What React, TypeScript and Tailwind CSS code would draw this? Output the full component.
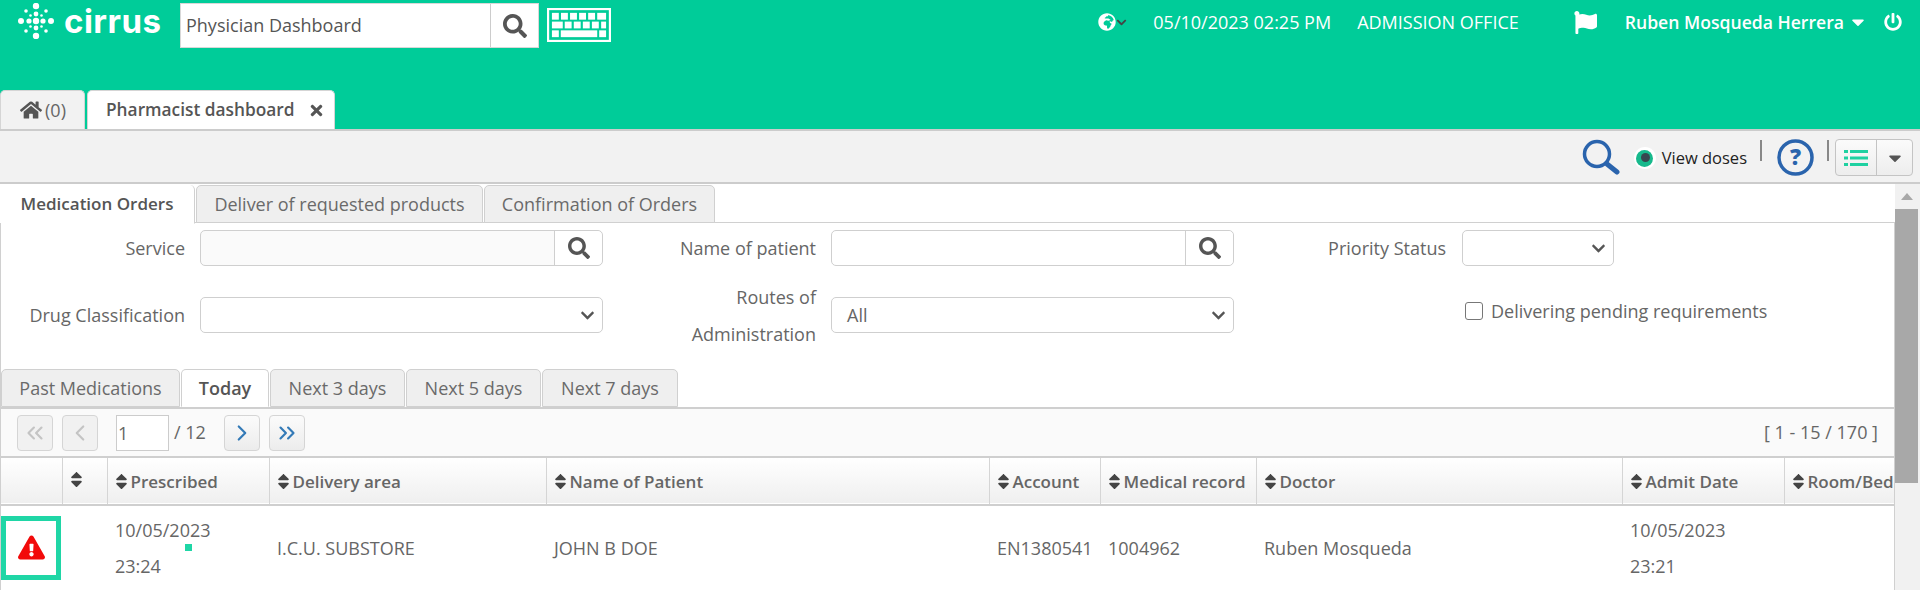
import React from "react";
import { FaHome, FaSearch, FaTimes, FaFlag, FaPowerOff, FaCaretDown, FaSort, FaGlobeAfrica, FaExclamationTriangle, FaChevronDown } from "react-icons/fa";
import { ChevronLeft, ChevronRight, ChevronsLeft, ChevronsRight } from "lucide-react";

const font = "font-['Open_Sans',sans-serif]";

function Logo() {
  const dots: [number, number, number][] = [
    [18, 3, 3.2], [18, 33, 3.2], [3, 18, 3], [33, 18, 3],
    [18, 18, 3.2], [11, 18, 2.6], [25, 18, 2.6], [18, 11, 2.4], [18, 25, 2.4],
    [8, 8, 1.8], [28, 8, 1.8], [8, 28, 1.8], [28, 28, 1.8],
    [12.5, 12.5, 1.3], [23.5, 12.5, 1.3], [12.5, 23.5, 1.3], [23.5, 23.5, 1.3],
  ];
  return (
    <svg viewBox="0 0 36 36" className="w-[36px] h-[36px] shrink-0 fill-white">
      {dots.map(([x, y, r], i) => <circle key={i} cx={x} cy={y} r={r} />)}
    </svg>
  );
}

function Keyboard() {
  const rows: [number, number, number][] = [];
  [0, 1, 2, 3, 4].forEach((i) => rows.push([5 + i * 9.2, 5, 7]));
  rows.push([51, 5, 9]);
  rows.push([5, 14, 11]);
  [0, 1, 2, 3].forEach((i) => rows.push([18 + i * 9.2, 14, 7]));
  rows.push([55, 14, 5]);
  return (
    <svg viewBox="0 0 65 35" preserveAspectRatio="none" className="w-[64px] h-[34px] shrink-0 ml-[8px] mt-[5px]">
      <rect x="1" y="1" width="63" height="33" fill="none" stroke="#fff" strokeWidth="2.4" />
      {rows.map(([x, y, w], i) => <rect key={i} x={x} y={y} width={w} height="7" fill="#fff" />)}
      <rect x="5" y="23" width="7" height="7" fill="#fff" />
      <rect x="14" y="23" width="37" height="7" fill="#fff" />
      <rect x="53" y="23" width="7" height="7" fill="#fff" />
    </svg>
  );
}

function TopTab({ active, className, children }: { active?: boolean; className: string; children: React.ReactNode }) {
  return (
    <div className={`flex items-center rounded-t-[5px] border border-b-0 border-[#d5d5d5] h-[39px] text-[#555] ${active ? "bg-white font-semibold" : "bg-[#f2f2f2]"} ${className}`}>
      {children}
    </div>
  );
}

function Tab({ active, className, children }: { active?: boolean; className: string; children: React.ReactNode }) {
  return (
    <div className={`flex items-center justify-center shrink-0 rounded-t-[5px] border border-[#d0d0d0] ${active ? "bg-white border-b-white font-semibold text-[#555]" : "bg-[#efefef] text-[#6a6a6a] text-[18px]"} ${className}`}>
      {children}
    </div>
  );
}

function SearchBox({ disabled }: { disabled?: boolean }) {
  return (
    <div className={`flex w-[403px] h-[36px] rounded-[5px] border border-[#cfcfcf] ${disabled ? "bg-[#fafafa]" : "bg-white"}`}>
      <div className="flex-1" />
      <div className="w-[48px] border-l border-[#cfcfcf] bg-white rounded-r-[5px] flex items-center justify-center text-[#555] text-[22px]">
        <FaSearch />
      </div>
    </div>
  );
}

function SelectBox({ width, value }: { width: string; value?: string }) {
  return (
    <div className={`flex items-center justify-between h-[36px] rounded-[5px] border border-[#cfcfcf] bg-white pl-[15px] pr-[7px] text-[18px] text-[#666] ${width}`}>
      <span>{value}</span>
      <FaChevronDown className="text-[#555] text-[15px]" />
    </div>
  );
}

function PagerButton({ on, children }: { on?: boolean; children: React.ReactNode }) {
  return (
    <div className={`w-[36px] h-[36px] rounded-[4px] border border-[#d5d5d5] flex items-center justify-center ${on ? "bg-gradient-to-b from-[#fbfbfb] to-[#ececec] text-[#337ab7]" : "bg-[#f1f1f1] text-[#c4c4c4]"}`}>
      {children}
    </div>
  );
}

function Th({ children }: { children?: React.ReactNode }) {
  return (
    <th className="border-l border-[#d5d5d5] p-0 pl-[4px] pt-[4px] text-left font-semibold text-[17px] text-[#666] whitespace-nowrap overflow-hidden">
      <span className="inline-flex items-center">
        <FaSort className="text-[#444] text-[19px] shrink-0" />
        {children}
      </span>
    </th>
  );
}

function Td({ children }: { children?: React.ReactNode }) {
  return <td className="p-0 pl-[8px] text-[18px] leading-[36px] text-[#666] align-middle">{children}</td>;
}

export default function App() {
  return (
    <div className={`${font} w-[1920px] h-[590px] overflow-hidden bg-white flex flex-col`}>
      <header className="h-[129px] shrink-0 bg-[#00cc99] flex flex-col justify-between">
        <div className="flex items-start pt-[3px] pl-[18px] pr-[18px]">
          <Logo />
          <span className="ml-[10px] font-['Inter',sans-serif] font-bold text-white text-[33px] leading-[36px] tracking-[0.5px] w-[106px]">cirrus</span>
          <div className="ml-[10px] flex w-[359px] h-[45px] bg-white border border-[#d8d8d8]">
            <span className="flex-1 pl-[5px] text-[18px] leading-[43px] text-[#555]">Physician Dashboard</span>
            <div className="w-[48px] border-l border-[#ccc] flex items-center justify-center text-[24px] text-[#555]"><FaSearch /></div>
          </div>
          <Keyboard />
          <div className="ml-auto flex items-center h-[38px] text-white text-[18px]">
            <FaGlobeAfrica className="text-[18px]" />
            <FaChevronDown className="text-[#444] text-[11px]" />
            <span className="ml-[26px]">05/10/2023 02:25 PM</span>
            <span className="ml-[26px]">ADMISSION OFFICE</span>
            <FaFlag className="ml-[55px] text-[23px]" />
            <span className="ml-[28px] text-[17.6px] font-semibold">Ruben Mosqueda Herrera</span>
            <FaCaretDown className="ml-[4px] text-[20px]" />
            <FaPowerOff className="ml-[16px] text-[18px]" />
          </div>
        </div>
        <div className="flex items-end gap-[2px]">
          <TopTab className="w-[85px] justify-center gap-[3px] pl-[1px]">
            <FaHome className="text-[22px]" /><span className="text-[#666] text-[18px]">(0)</span>
          </TopTab>
          <TopTab active className="w-[248px] pl-[18px]">
            <span className="text-[17.3px]">Pharmacist dashboard</span>
            <FaTimes className="ml-[14px] text-[17px]" />
          </TopTab>
        </div>
      </header>

      <div className="h-[55px] shrink-0 bg-[#f2f2f2] border-y-2 border-[#cccccc] flex items-start justify-end pr-[7px] pt-[8px]">
        <svg viewBox="0 0 38 36" className="w-[38px] h-[36px]" fill="none" stroke="#2a64ad">
          <circle cx="15" cy="15" r="12.5" strokeWidth="3.5" />
          <path d="M25 25 L35 33" strokeWidth="5" strokeLinecap="round" />
        </svg>
        <div className="ml-[14px] mt-[8px] w-[22px] h-[22px] rounded-full bg-white flex items-center justify-center">
          <div className="w-[17px] h-[17px] rounded-full bg-[#17b98c] flex items-center justify-center">
            <div className="w-[9px] h-[9px] rounded-full bg-[#37474f] ml-[1px] -mt-[1px]" />
          </div>
        </div>
        <span className="ml-[6px] mt-[9px] text-[16.5px] leading-[20px] text-[#222]">View doses</span>
        <div className="ml-[13px] mt-[1px] w-[2px] h-[21px] bg-[#888]" />
        <svg viewBox="0 0 37 37" className="ml-[15px] w-[37px] h-[37px]" fill="none">
          <circle cx="18.5" cy="18.5" r="16.5" stroke="#2a64ad" strokeWidth="3.5" />
          <text x="18.5" y="26" textAnchor="middle" fontSize="22" fontWeight="800" fill="#2a64ad" fontFamily="Open Sans">?</text>
        </svg>
        <div className="ml-[13px] mt-[1px] w-[2px] h-[21px] bg-[#888]" />
        <div className="ml-[6px] w-[78px] h-[37px] rounded-[4px] border border-[#c4c4c4] flex bg-gradient-to-b from-[#fbfbfb] to-[#ededed]">
          <div className="w-[41px] border-r border-[#c4c4c4] flex items-center justify-center">
            <svg viewBox="0 0 24 16" className="w-[24px] h-[16px]" fill="#1fd1a1">
              <rect x="0" y="0" width="4" height="3" /><rect x="6" y="0" width="18" height="3" />
              <rect x="0" y="6.5" width="4" height="3" /><rect x="6" y="6.5" width="18" height="3" />
              <rect x="0" y="13" width="4" height="3" /><rect x="6" y="13" width="18" height="3" />
            </svg>
          </div>
          <div className="flex-1 flex items-center justify-center text-[#555] text-[20px]"><FaCaretDown /></div>
        </div>
      </div>

      <div className="flex flex-1 min-h-0">
        <main className="w-[1895px] shrink-0 flex flex-col">
          <div className="flex pt-[1px] h-[39px] shrink-0 gap-[1px] border-b border-[#d0d0d0]">
            <Tab active className="w-[195px] h-[39px] border-l-0 border-t-0 text-[17px]">Medication Orders</Tab>
            <Tab className="w-[287px] h-[38px]">Deliver of requested products</Tab>
            <Tab className="w-[231px] h-[38px]">Confirmation of Orders</Tab>
          </div>
          <div className="flex-1 border-l border-r border-[#d0d0d0] flex flex-col min-h-0">
            <div className="h-[146px] shrink-0 pt-[7px] grid grid-cols-[184px_418px_213px_419px_211px_1fr] grid-rows-[36px_36px] gap-y-[31px] text-[18px] text-[#666]">
              <div className="text-right self-center">Service</div>
              <div className="ml-[15px]"><SearchBox disabled /></div>
              <div className="text-right self-center">Name of patient</div>
              <div className="ml-[15px]"><SearchBox /></div>
              <div className="text-right self-center">Priority Status</div>
              <div className="ml-[16px]"><SelectBox width="w-[152px]" /></div>
              <div className="text-right self-center">Drug Classification</div>
              <div className="ml-[15px]"><SelectBox width="w-[403px]" /></div>
              <div className="text-right leading-[37px] self-center pt-[1px]">Routes of<br />Administration</div>
              <div className="ml-[15px]"><SelectBox width="w-[403px]" value="All" /></div>
              <div />
              <div className="ml-[19px] flex items-center gap-[8px] -mt-[8px] whitespace-nowrap">
                <div className="w-[18px] h-[18px] rounded-[3px] border border-[#777] bg-white shrink-0" />
                <span>Delivering pending requirements</span>
              </div>
            </div>
            <div className="flex gap-[1px] h-[38px] shrink-0">
              <Tab className="w-[179px] h-[38px] pt-[1px]">Past Medications</Tab>
              <Tab active className="w-[88px] h-[38px] text-[18px] pt-[1px]">Today</Tab>
              <Tab className="w-[135px] h-[38px] pt-[1px]">Next 3 days</Tab>
              <Tab className="w-[135px] h-[38px] pt-[1px]">Next 5 days</Tab>
              <Tab className="w-[136px] h-[38px] pt-[1px]">Next 7 days</Tab>
            </div>
            <div className="h-[51px] shrink-0 border-y-2 border-[#cfcfcf] bg-[#fafafa] flex items-center pl-[16px] pr-[16px] text-[18px] text-[#666]">
              <PagerButton><ChevronsLeft size={26} strokeWidth={2} /></PagerButton>
              <div className="ml-[9px]"><PagerButton><ChevronLeft size={26} strokeWidth={2} /></PagerButton></div>
              <div className="ml-[18px] w-[53px] h-[36px] bg-white border border-[#ccc] pl-[1px] leading-[34px]">1</div>
              <span className="ml-[5px]">/ 12</span>
              <div className="ml-[18px]"><PagerButton on><ChevronRight size={26} strokeWidth={2} /></PagerButton></div>
              <div className="ml-[9px]"><PagerButton on><ChevronsRight size={26} strokeWidth={2} /></PagerButton></div>
              <span className="ml-auto">[ 1 - 15 / 170 ]</span>
            </div>
            <table className="w-full table-fixed border-collapse">
              <colgroup>
                <col className="w-[61px]" /><col className="w-[45px]" /><col className="w-[162px]" /><col className="w-[277px]" />
                <col className="w-[443px]" /><col className="w-[111px]" /><col className="w-[156px]" /><col className="w-[366px]" />
                <col className="w-[162px]" /><col />
              </colgroup>
              <thead>
                <tr className="h-[47px] bg-gradient-to-b from-white to-[#efefef] border-b-2 border-[#cfcfcf]">
                  <th className="p-0" />
                  <Th />
                  <Th>Prescribed</Th>
                  <Th>Delivery area</Th>
                  <Th>Name of Patient</Th>
                  <Th>Account</Th>
                  <Th>Medical record</Th>
                  <Th>Doctor</Th>
                  <Th>Admit Date</Th>
                  <Th>Room/Bed</Th>
                </tr>
              </thead>
              <tbody>
                <tr className="h-[85px] border-b border-[#eee]">
                  <td className="p-0 align-middle">
                    <div className="w-[60px] h-[64px] border-[5px] border-[#1fd6a6] flex items-center justify-center">
                      <FaExclamationTriangle className="text-[#f20a0a] text-[27px]" />
                    </div>
                  </td>
                  <td className="p-0" />
                  <Td><div className="relative">10/05/2023<br />23:24<span className="absolute left-[70px] top-[32px] w-[7px] h-[7px] bg-[#1fd6a6]" /></div></Td>
                  <Td>I.C.U. SUBSTORE</Td>
                  <Td>JOHN B DOE</Td>
                  <Td>EN1380541</Td>
                  <Td>1004962</Td>
                  <Td>Ruben Mosqueda</Td>
                  <Td>10/05/2023<br />23:21</Td>
                  <Td />
                </tr>
              </tbody>
            </table>
          </div>
        </main>
        <aside className="flex-1 bg-[#f1f1f1] flex flex-col items-center pr-[2px]">
          <div className="h-[25px] flex items-center justify-center">
            <div className="w-0 h-0 border-x-[6px] border-x-transparent border-b-[7px] border-b-[#a8a8a8]" />
          </div>
          <div className="w-full h-[274px] bg-[#a8a8a8]" />
        </aside>
      </div>
    </div>
  );
}
